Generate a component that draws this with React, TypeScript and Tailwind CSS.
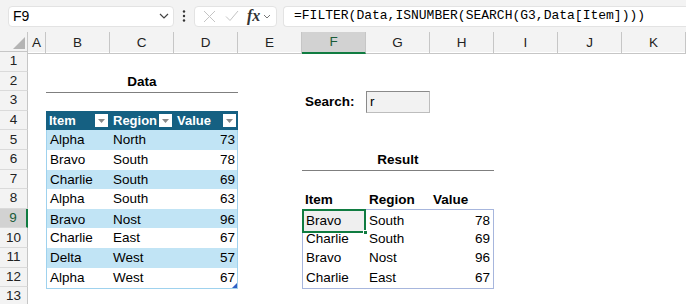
import React from "react";

const COLS = ["A", "B", "C", "D", "E", "F", "G", "H", "I", "J", "K"];

const data: [string, string, number][] = [
  ["Alpha", "North", 73],
  ["Bravo", "South", 78],
  ["Charlie", "South", 69],
  ["Alpha", "South", 63],
  ["Bravo", "Nost", 96],
  ["Charlie", "East", 67],
  ["Delta", "West", 57],
  ["Alpha", "West", 67],
];

const result: [string, string, number][] = [
  ["Bravo", "South", 78],
  ["Charlie", "South", 69],
  ["Bravo", "Nost", 96],
  ["Charlie", "East", 67],
];

function FilterButton() {
  return (
    <span className="ml-auto mr-[2px] flex h-[13px] w-[13px] items-center justify-center bg-white">
      <svg width="7" height="4" viewBox="0 0 7 4">
        <path d="M0 0h7L3.5 4z" fill="#8a8a8a" />
      </svg>
    </span>
  );
}

function Row({ n, children }: { n: number; children?: React.ReactNode }) {
  const sel = n === 9;
  return (
    <div className="flex h-[19.6px]">
      <div
        className={
          sel
            ? "flex w-[28px] shrink-0 items-center justify-center border-b border-r-2 border-b-[#dadada] border-r-[#107c41] bg-[#d2d2d2] text-[13.5px] text-[#1a5c38]"
            : "flex w-[28px] shrink-0 items-center justify-center border-b border-r border-b-[#dadada] border-r-[#c6c6c6] bg-[#f3f3f3] text-[13.5px] text-[#222]"
        }
      >
        {n}
      </div>
      <div className="grid flex-1 grid-cols-[18px_repeat(10,64px)]">{children}</div>
    </div>
  );
}

function ResultRow({ row, first, last }: { row: [string, string, number]; first: boolean; last: boolean }) {
  const b = `${first ? "border-t" : ""} ${last ? "border-b" : ""} border-[#a7b6dd]`;
  return (
    <>
      <div
        className={
          first
            ? "relative col-start-6 flex items-center border-2 border-[#107c41] bg-[#efefef] pl-[2px]"
            : `col-start-6 flex items-center border-l pl-[3px] ${b}`
        }
      >
        {row[0]}
        {first && <span className="absolute -bottom-[4px] -right-[4px] h-[5px] w-[5px] border border-white bg-[#107c41]" />}
      </div>
      <div className={`flex items-center pl-[3px] ${b}`}>{row[1]}</div>
      <div className={`flex items-center justify-end border-r pr-[3px] ${b}`}>{row[2]}</div>
    </>
  );
}

function TableRow({
  n,
  row,
  band,
  last,
  extra,
}: {
  n: number;
  row: [string, string, number];
  band: boolean;
  last: boolean;
  extra: React.ReactNode;
}) {
  const bg = band ? "bg-[#c1e4f5]" : "bg-white";
  return (
    <Row n={n}>
      <div className={`col-start-2 flex items-center border-b border-l border-[#9fd2ee] pl-[3px] ${bg}`}>{row[0]}</div>
      <div className={`flex items-center border-b border-[#9fd2ee] pl-[3px] ${bg}`}>{row[1]}</div>
      <div className={`relative flex items-center justify-end border-b border-r border-[#9fd2ee] pr-[2px] ${bg}`}>
        {row[2]}
        {last && (
          <svg className="absolute bottom-0 right-0" width="5" height="5" viewBox="0 0 5 5">
            <path d="M5 0v5H0z" fill="#2f5fc4" />
          </svg>
        )}
      </div>
      {extra}
    </Row>
  );
}

export default function App() {
  return (
    <div className="h-[304px] w-[686px] overflow-hidden bg-white font-['Liberation_Sans',Arial,sans-serif] text-[13.5px] text-black">
      {/* formula bar */}
      <div className="flex h-[32px] items-center bg-[#f3f3f3] pl-[8px]">
        <div className="flex h-[21px] w-[166px] items-center justify-between rounded-[4px] border border-[#e3e3e3] bg-white pl-[4px] pr-[4px] text-[14px]">
          <span>F9</span>
          <svg width="10" height="6" viewBox="0 0 10 6">
            <path d="M1 1l4 4 4-4" fill="none" stroke="#444" strokeWidth="1.2" />
          </svg>
        </div>
        <svg className="ml-[8px]" width="4" height="14" viewBox="0 0 4 14">
          <circle cx="2" cy="2.5" r="1.2" fill="#333" />
          <circle cx="2" cy="7" r="1.2" fill="#333" />
          <circle cx="2" cy="11.5" r="1.2" fill="#333" />
        </svg>
        <div className="ml-[8px] flex h-[21px] w-[83px] items-center rounded-[4px] border border-[#e3e3e3] bg-white pl-[8px]">
          <svg width="13" height="13" viewBox="0 0 13 13">
            <path d="M1 1l11 11M12 1L1 12" stroke="#c4c4c4" strokeWidth="1" />
          </svg>
          <svg className="ml-[9px]" width="14" height="12" viewBox="0 0 14 12">
            <path d="M1 6.5l4 4 8-9.5" fill="none" stroke="#c4c4c4" strokeWidth="1" />
          </svg>
          <span className="ml-[8px] font-['Liberation_Serif',serif] text-[16px] font-bold italic leading-none text-[#333]">fx</span>
          <svg className="ml-[3px]" width="8" height="5" viewBox="0 0 8 5">
            <path d="M1 1l3 3 3-3" fill="none" stroke="#777" strokeWidth="1" />
          </svg>
        </div>
        <div className="ml-[6px] flex h-[21px] flex-1 items-center rounded-l-[4px] border border-r-0 border-[#e3e3e3] bg-white pl-[10px] font-['Liberation_Mono',monospace] text-[13px]">
          =FILTER(Data,ISNUMBER(SEARCH(G3,Data[Item])))
        </div>
      </div>

      {/* column headers */}
      <div className="flex h-[20px] bg-[#f3f3f3] text-[13.5px] text-[#222]">
        <div className="relative w-[28px] shrink-0 border-b border-r border-[#c6c6c6]">
          <svg className="absolute bottom-[2px] right-[2px]" width="12" height="12" viewBox="0 0 12 12">
            <path d="M12 0v12H0z" fill="#b4b4b4" />
          </svg>
        </div>
        <div className="grid flex-1 grid-cols-[18px_repeat(10,64px)]">
          {COLS.map((c) => (
            <div
              key={c}
              className={
                c === "F"
                  ? "flex items-center justify-center border-b-2 border-r border-b-[#107c41] border-r-[#c6c6c6] bg-[#d2d2d2] text-[#1a5c38]"
                  : "flex items-center justify-center border-b border-r border-[#c6c6c6]"
              }
            >
              {c}
            </div>
          ))}
        </div>
      </div>

      <Row n={1} />
      <Row n={2}>
        <div className="col-span-3 col-start-2 flex items-center justify-center border-b border-[#7f7f7f] font-bold">Data</div>
      </Row>
      <Row n={3}>
        <div className="col-start-6 flex items-center pl-[3px] font-bold">Search:</div>
        <div className="flex items-center border border-[#8a8a8a] border-b-[#bdbdbd] border-r-[#bdbdbd] bg-[#f2f2f2] pl-[3px]">r</div>
      </Row>
      <Row n={4}>
        <div className="col-start-2 flex items-center bg-[#156082] pl-[3px] text-[13px] font-bold text-white">
          Item
          <FilterButton />
        </div>
        <div className="flex items-center bg-[#156082] pl-[3px] text-[13px] font-bold text-white">
          Region
          <FilterButton />
        </div>
        <div className="flex items-center bg-[#156082] pl-[3px] text-[13px] font-bold text-white">
          Value
          <FilterButton />
        </div>
      </Row>
      {data.map((r, i) => {
        const n = i + 5;
        const extra =
          n === 6 ? (
            <div className="col-span-3 col-start-6 flex items-center justify-center border-b border-[#7f7f7f] font-bold">Result</div>
          ) : n === 8 ? (
            <>
              <div className="col-start-6 flex items-center pl-[3px] font-bold">Item</div>
              <div className="flex items-center pl-[3px] font-bold">Region</div>
              <div className="flex items-center pl-[3px] font-bold">Value</div>
            </>
          ) : n >= 9 ? (
            <ResultRow row={result[n - 9]} first={n === 9} last={n === 12} />
          ) : null;
        return <TableRow key={n} n={n} row={r} band={i % 2 === 0} last={n === 12} extra={extra} />;
      })}
      <Row n={13} />
    </div>
  );
}
